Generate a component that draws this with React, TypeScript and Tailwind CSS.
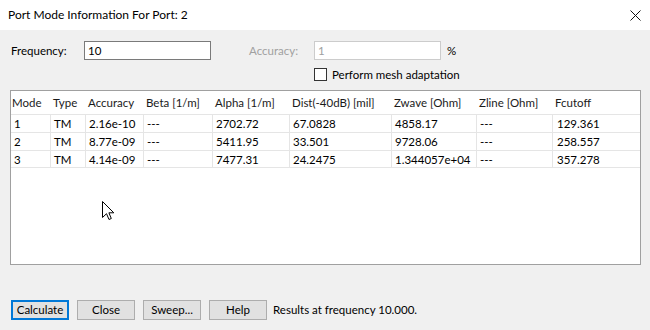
import React from "react";

const cols = [
  { name: "Mode", w: 40 },
  { name: "Type", w: 35 },
  { name: "Accuracy", w: 58 },
  { name: "Beta [1/m]", w: 69 },
  { name: "Alpha [1/m]", w: 77 },
  { name: "Dist(-40dB) [mil]", w: 102 },
  { name: "Zwave [Ohm]", w: 85 },
  { name: "Zline [Ohm]", w: 76 },
  { name: "Fcutoff", w: 87 },
];

const rows = [
  ["1", "TM", "2.16e-10", "---", "2702.72", "67.0828", "4858.17", "---", "129.361"],
  ["2", "TM", "8.77e-09", "---", "5411.95", "33.501", "9728.06", "---", "258.557"],
  ["3", "TM", "4.14e-09", "---", "7477.31", "24.2475", "1.344057e+04", "---", "357.278"],
];

function Cursor() {
  return (
    <svg width="13" height="20" viewBox="0 0 13 20" className="absolute left-[102px] top-[201px]">
      <path
        d="M0.5 0.5 L0.5 16.5 L4.5 12.7 L7 18.5 L9.3 17.5 L6.9 11.8 L11.8 11.8 Z"
        fill="white"
        stroke="black"
        strokeWidth="1"
        strokeLinejoin="miter"
      />
    </svg>
  );
}

export default function App() {
  return (
    <div className="relative w-[650px] h-[330px] bg-[#f0f0f0] font-['Lato',sans-serif] text-[11.5px] text-black overflow-hidden">
      {/* title bar */}
      <div className="h-[30px] bg-white flex items-center justify-between pl-[8px] pr-[9px]">
        <span className="text-[12px] leading-none">Port Mode Information For Port: 2</span>
        <svg width="11" height="11" viewBox="0 0 11 11">
          <path d="M0.5 0.5 L10.5 10.5 M10.5 0.5 L0.5 10.5" stroke="#111" strokeWidth="1" />
        </svg>
      </div>

      {/* frequency / accuracy */}
      <div className="mt-[11px] h-[19px] flex items-center">
        <span className="ml-[11px] w-[73px]">Frequency:</span>
        <div className="w-[127px] h-[19px] bg-white border border-[#7a7a7a] flex items-center pl-[3px]">10</div>
        <span className="ml-[38px] w-[65px] text-[#a0a0a0]">Accuracy:</span>
        <div className="w-[127px] h-[19px] bg-white border border-[#cccccc] flex items-center pl-[3px] text-[#a0a0a0]">1</div>
        <span className="ml-[6px]">%</span>
      </div>

      <div className="mt-[8px] ml-[314px] h-[13px] flex items-center gap-[5px]">
        <div className="w-[13px] h-[13px] bg-white border border-[#333]" />
        <span>Perform mesh adaptation</span>
      </div>

      {/* table */}
      <div className="mt-[9px] ml-[10px] w-[631px] h-[175px] bg-white border border-[#a0a0a0]">
        <div className="flex h-[23px] items-center">
          {cols.map((c, i) => (
            <div
              key={c.name}
              style={{ width: c.w }}
              className={i === 0 ? "pl-[1px] text-[#1a1a1a]" : "pl-[2px] text-[#1a1a1a]"}
            >
              {c.name}
            </div>
          ))}
        </div>
        {rows.map((r, ri) => (
          <div key={ri} className="flex h-[18px] border-t border-[#e5e5e5] last:border-b">
            {r.map((v, ci) => (
              <div
                key={ci}
                style={{ width: cols[ci].w }}
                className={
                  ci < r.length - 1
                    ? "border-r border-[#e5e5e5] pl-[3px] leading-[17px]"
                    : "pl-[4px] leading-[17px]"
                }
              >
                {v}
              </div>
            ))}
          </div>
        ))}
      </div>

      {/* buttons */}
      <div className="mt-[35px] ml-[11px] flex items-center gap-[8px]">
        <button className="w-[58px] h-[20px] bg-[#e1e1e1] border-2 border-[#0078d7] flex items-center justify-center">
          Calculate
        </button>
        <button className="w-[58px] h-[20px] bg-[#e1e1e1] border border-[#adadad] flex items-center justify-center">
          Close
        </button>
        <button className="w-[58px] h-[20px] bg-[#e1e1e1] border border-[#adadad] flex items-center justify-center">
          Sweep...
        </button>
        <button className="w-[58px] h-[20px] bg-[#e1e1e1] border border-[#adadad] flex items-center justify-center">
          Help
        </button>
        <span className="ml-[-2px]">Results at frequency 10.000.</span>
      </div>

      <Cursor />
    </div>
  );
}
